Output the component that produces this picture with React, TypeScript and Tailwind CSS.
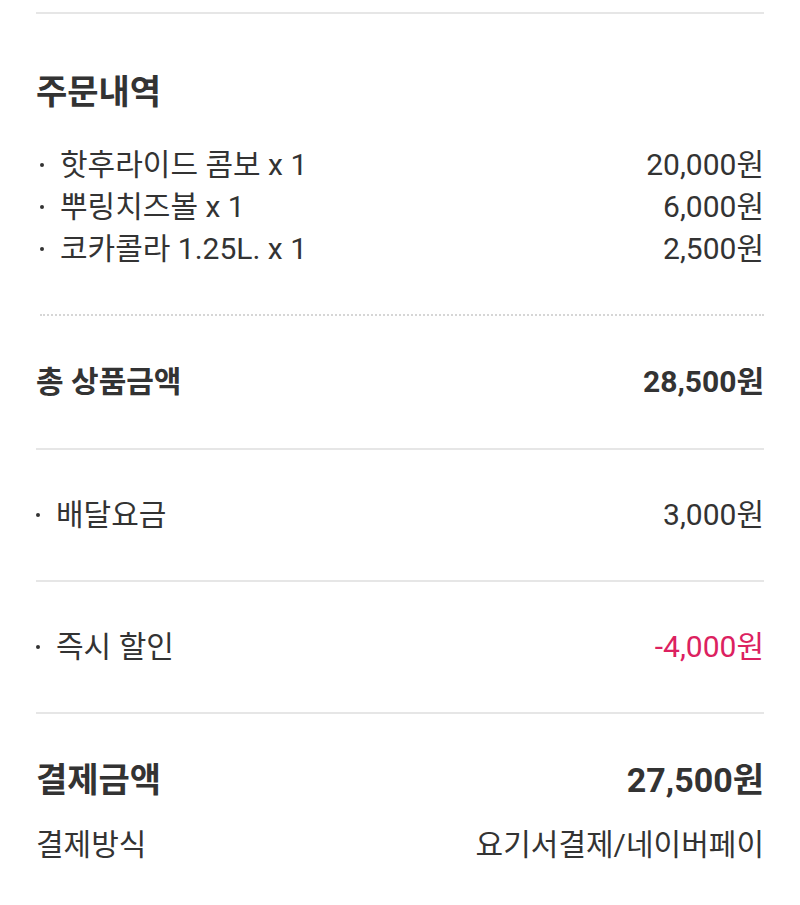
const items = [
  { name: "핫후라이드 콤보 x 1", price: "20,000원" },
  { name: "뿌링치즈볼 x 1", price: "6,000원" },
  { name: "코카콜라 1.25L. x 1", price: "2,500원" },
]

function Dot() {
  return <span className="mr-4 ml-1 inline-block h-[4px] w-[4px] rounded-full bg-[#333333]" />
}

function FeeRow({ label, value, red }: { label: string; value: string; red?: boolean }) {
  return (
    <div className="flex items-center justify-between py-[44px] text-[30px] leading-[42px]">
      <div className="flex items-center">
        <span className="mr-4 inline-block h-[4px] w-[4px] rounded-full bg-[#333333]" />
        <span>{label}</span>
      </div>
      <span className={red ? "text-[#dc2160]" : ""}>{value}</span>
    </div>
  )
}

export default function App() {
  return (
    <div
      className="min-h-[905px] bg-white px-9 pt-3 text-[#333333]"
      style={{ fontFamily: "Roboto, 'Noto Sans CJK KR', sans-serif" }}
    >
      <div className="border-t-2 border-[#e6e6e6]" />

      <h2 className="mt-[58px] text-[34px] font-bold leading-[40px]">주문내역</h2>

      <ul className="mt-8 mb-[44px] text-[30px] leading-[42px]">
        {items.map((item) => (
          <li key={item.name} className="flex items-center justify-between">
            <div className="flex items-center">
              <Dot />
              <span>{item.name}</span>
            </div>
            <span>{item.price}</span>
          </li>
        ))}
      </ul>

      <div className="ml-1 border-t-2 border-dotted border-[#d6d6d6]" />

      <div className="flex items-center justify-between py-[46px] text-[30px] font-bold leading-[40px]">
        <span>총 상품금액</span>
        <span>28,500원</span>
      </div>

      <div className="border-t-2 border-[#e6e6e6]" />
      <FeeRow label="배달요금" value="3,000원" />
      <div className="border-t-2 border-[#e6e6e6]" />
      <FeeRow label="즉시 할인" value="-4,000원" red />
      <div className="border-t-2 border-[#e6e6e6]" />

      <div className="mt-[44px] flex items-center justify-between text-[34px] font-bold leading-[44px]">
        <span>결제금액</span>
        <span>27,500원</span>
      </div>
      <div className="mt-[22px] flex items-center justify-between text-[30px] leading-[42px]">
        <span>결제방식</span>
        <span>요기서결제/네이버페이</span>
      </div>
    </div>
  )
}
